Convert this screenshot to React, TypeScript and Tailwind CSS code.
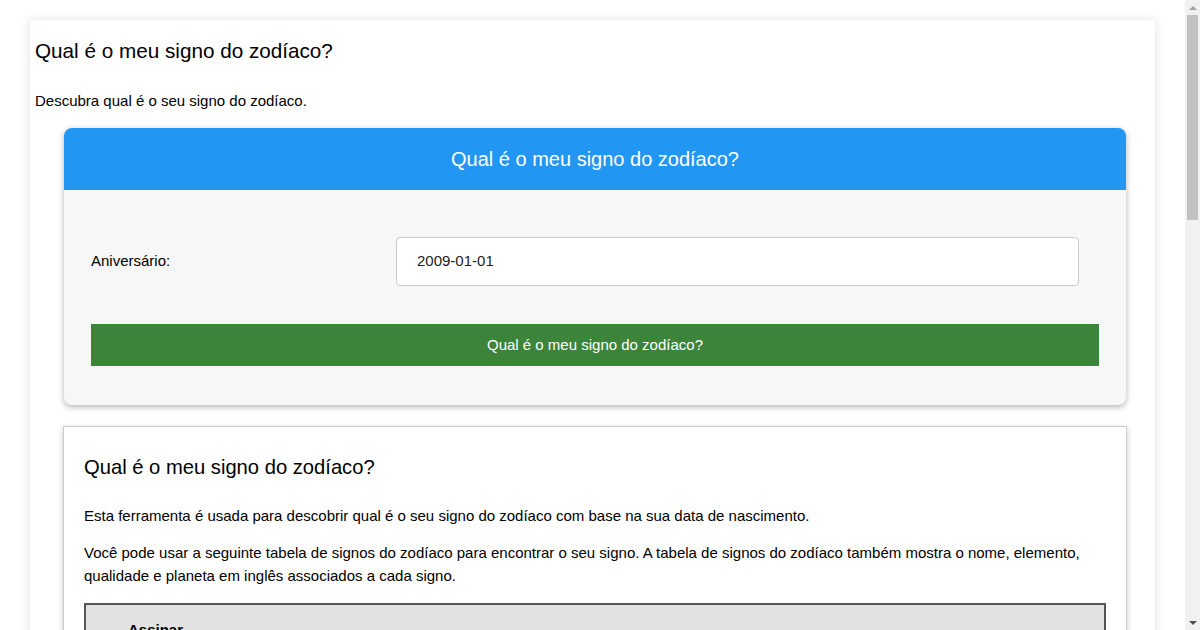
import React from "react";

export default function App() {
  return (
    <div className="flex h-[630px] overflow-hidden bg-white text-black" style={{ fontFamily: '"Liberation Sans", Arial, sans-serif' }}>
      <div className="flex-1 overflow-hidden pt-[20px]">
        <div className="mx-[30px] bg-white shadow-[0_0_10px_rgba(0,0,0,0.12)] px-[5px] pt-[19px] pb-[30px]">
          <h1 className="text-[20.7px] leading-[24px] font-normal">Qual é o meu signo do zodíaco?</h1>
          <p className="mt-[27px] text-[15px] leading-[22px]">Descubra qual é o seu signo do zodíaco.</p>

          <div className="mt-[16px] ml-[29px] w-[1062px] rounded-[8px] bg-[#f7f7f7] shadow-[0_2px_6px_rgba(0,0,0,0.3)] overflow-hidden">
            <div className="h-[62px] bg-[#2196f3] flex items-center justify-center text-white text-[20px]">
              Qual é o meu signo do zodíaco?
            </div>
            <div className="px-[27px] pt-[47px] pb-[39px]">
              <div className="flex items-center">
                <label className="w-[305px] text-[15px]">Aniversário:</label>
                <div className="w-[683px] h-[49px] bg-white border border-[#ccc] rounded-[4px] flex items-center pl-[20px] text-[15px] text-[#222]">
                  2009-01-01
                </div>
              </div>
              <button className="mt-[38px] w-full h-[42px] bg-[#3b8439] text-white text-[15px] flex items-center justify-center">
                Qual é o meu signo do zodíaco?
              </button>
            </div>
          </div>

          <div className="mt-[21px] ml-[28px] w-[1064px] border border-[#ccc] bg-white shadow-[0_2px_6px_rgba(0,0,0,0.2)] px-[20px] pt-[28px] pb-[24px]">
            <h2 className="text-[20.2px] leading-[24px] font-normal">Qual é o meu signo do zodíaco?</h2>
            <p className="mt-[25px] text-[15px] leading-[23px]">
              Esta ferramenta é usada para descobrir qual é o seu signo do zodíaco com base na sua data de nascimento.
            </p>
            <p className="mt-[14px] text-[15px] leading-[23px]">
              Você pode usar a seguinte tabela de signos do zodíaco para encontrar o seu signo. A tabela de signos do zodíaco também mostra o nome, elemento, qualidade e planeta em inglês associados a cada signo.
            </p>
            <table className="mt-[16px] w-full border-2 border-[#555] text-[15px] border-collapse">
              <thead>
                <tr className="bg-[#e2e2e2]">
                  <th className="text-left font-bold pl-[42px] pt-[14px] pb-[12px]">Assinar</th>
                </tr>
              </thead>
            </table>
          </div>
        </div>
      </div>
      <div className="w-[15px] h-full bg-[#f1f1f1] flex flex-col items-center">
        <div className="h-[15px] w-full flex items-center justify-center">
          <div className="w-0 h-0 border-l-[4px] border-r-[4px] border-b-[4px] border-l-transparent border-r-transparent border-b-[#a3a3a3]" />
        </div>
        <div className="w-[11px] h-[205px] bg-[#c1c1c1]" />
        <div className="flex-1" />
        <div className="h-[15px] w-full flex items-center justify-center">
          <div className="w-0 h-0 border-l-[4px] border-r-[4px] border-t-[4px] border-l-transparent border-r-transparent border-t-[#505050]" />
        </div>
      </div>
    </div>
  );
}
